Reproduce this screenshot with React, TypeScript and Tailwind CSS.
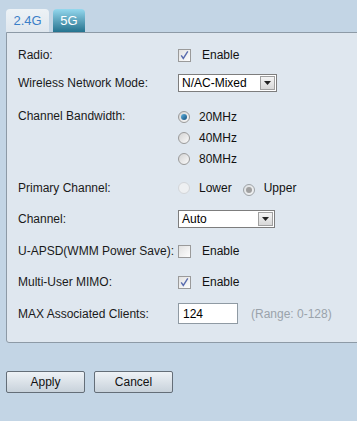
import React from 'react';

const font = { fontFamily: '"Liberation Sans", Arial, sans-serif' };

const Checkbox = ({ checked }: { checked: boolean }) => (
  <span className="relative inline-block w-[13px] h-[13px] border border-[#9a9a9a] bg-gradient-to-br from-[#e2e2e2] to-[#fdfdfd] shrink-0">
    {checked && (
      <svg viewBox="0 0 13 13" className="absolute -left-px -top-px w-[13px] h-[13px]">
        <path d="M3.2 6.3 L5.3 9.4 L9.8 2.4" fill="none" stroke="#5a6cae" strokeWidth="1.4" />
      </svg>
    )}
  </span>
);

const Radio = ({ checked, disabled }: { checked?: boolean; disabled?: boolean }) => (
  <span
    className={`relative inline-flex items-center justify-center w-[12px] h-[12px] rounded-full border shrink-0 ${
      disabled
        ? checked
          ? 'border-[#9ea3a7] bg-gradient-to-br from-[#dcdfe1] to-[#f4f5f6]'
          : 'border-[#d3d6d9] bg-[#eef0f2]'
        : 'border-[#9a9a9a] bg-gradient-to-br from-[#d4d4d4] to-[#fafafa]'
    }`}
  >
    {checked && (
      <span
        className={`w-[6px] h-[6px] rounded-full ${
          disabled ? 'bg-[#a0a0a0]' : 'bg-gradient-to-br from-[#5fb4e0] to-[#14507e]'
        }`}
      />
    )}
  </span>
);

const SelectBox = ({ value, width }: { value: string; width: string }) => (
  <div className={`flex items-center h-[18px] bg-white border border-[#7d7d7d] ${width}`}>
    <span className="flex-1 pl-[3px] text-[12px] text-black leading-none">{value}</span>
    <span className="flex items-center justify-center w-[15px] h-[14px] mr-px border border-[#a0a0a0] bg-gradient-to-b from-[#f4f4f4] to-[#d8d8d8]">
      <svg viewBox="0 0 7 4" className="w-[7px] h-[4px]">
        <path d="M0 0 L7 0 L3.5 4 Z" fill="#222" />
      </svg>
    </span>
  </div>
);

const Label = ({ children }: { children: React.ReactNode }) => (
  <div className="w-[160px] shrink-0 text-[12px] text-[#1a1a1a]">{children}</div>
);

const App: React.FC = () => {
  return (
    <div className="w-[357px] h-[421px] bg-[#c3d5e5] overflow-hidden" style={font}>
      {/* Tabs */}
      <div className="flex gap-[4px] pl-[6px] pt-[9px]">
        <div className="w-[43px] h-[23px] flex items-center justify-center rounded-t-[4px] bg-gradient-to-b from-[#edf2f6] to-[#dfe7ee] text-[13px] text-[#3b7fc8]">
          2.4G
        </div>
        <div className="w-[32px] h-[23px] flex items-center justify-center rounded-t-[4px] bg-gradient-to-b from-[#94d8ee] to-[#23738f] text-[13px] text-white">
          5G
        </div>
      </div>

      {/* Panel */}
      <div className="ml-[6px] w-[360px] h-[311px] bg-[#dfe7ef] border border-[#8d9aa6] rounded-bl-[3px] pl-[11px] pt-[12px]">
        <div className="flex items-center h-[20px]">
          <Label>Radio:</Label>
          <Checkbox checked />
          <span className="ml-[11px] text-[12px] text-[#111]">Enable</span>
        </div>

        <div className="flex items-center h-[20px] mt-[8px]">
          <Label>Wireless Network Mode:</Label>
          <SelectBox value="N/AC-Mixed" width="w-[99px]" />
        </div>

        <div className="flex mt-[13px]">
          <Label>
            <div className="pt-[1px]">Channel Bandwidth:</div>
          </Label>
          <div className="flex flex-col">
            {['20MHz', '40MHz', '80MHz'].map((v, i) => (
              <div key={v} className="flex items-center h-[21px]">
                <Radio checked={i === 0} />
                <span className="ml-[9px] text-[12px] text-[#111]">{v}</span>
              </div>
            ))}
          </div>
        </div>

        <div className="flex items-center h-[20px] mt-[9px]">
          <Label>Primary Channel:</Label>
          <Radio disabled />
          <span className="ml-[9px] text-[12px] text-[#111]">Lower</span>
          <span className="ml-[11px]">
            <Radio checked disabled />
          </span>
          <span className="ml-[9px] text-[12px] text-[#111]">Upper</span>
        </div>

        <div className="flex items-center h-[20px] mt-[11px]">
          <Label>Channel:</Label>
          <SelectBox value="Auto" width="w-[97px]" />
        </div>

        <div className="flex items-center h-[20px] mt-[12px]">
          <Label>U-APSD(WMM Power Save):</Label>
          <Checkbox checked={false} />
          <span className="ml-[11px] text-[12px] text-[#111]">Enable</span>
        </div>

        <div className="flex items-center h-[20px] mt-[11px]">
          <Label>Multi-User MIMO:</Label>
          <Checkbox checked />
          <span className="ml-[11px] text-[12px] text-[#111]">Enable</span>
        </div>

        <div className="flex items-center h-[21px] mt-[11px]">
          <Label>MAX Associated Clients:</Label>
          <div className="w-[60px] h-[21px] flex items-center bg-white border border-[#8f9aa3] pl-[4px] text-[12px] text-black">
            124
          </div>
          <span className="ml-[13px] text-[12px] text-[#9aa3ab]">(Range: 0-128)</span>
        </div>
      </div>

      {/* Buttons */}
      <div className="flex gap-[9px] pl-[6px] mt-[28px]">
        {['Apply', 'Cancel'].map((b) => (
          <button
            key={b}
            className="w-[79px] h-[22px] rounded-[2px] border border-[#646e78] bg-gradient-to-b from-[#eef2f6] to-[#c8d2db] text-[12px] text-[#111]"
          >
            {b}
          </button>
        ))}
      </div>
    </div>
  );
};

export default App;
